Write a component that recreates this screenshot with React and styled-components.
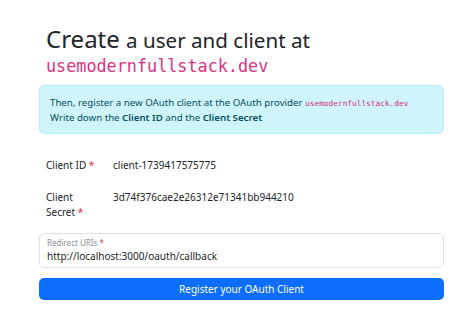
import React from "react";
import styled, { createGlobalStyle } from "styled-components";

const Global = createGlobalStyle`
  html, body { margin: 0; padding: 0; background: #fff; }
  body { font-family: "Noto Sans", "Open Sans", sans-serif; color: #212529; }
  * { box-sizing: border-box; }
`;

const Page = styled.div`
  width: 474px;
  padding: 23px 30px 0 39px;
  display: flex;
  flex-direction: column;
`;

const Title = styled.h1`
  margin: 0 0 0 7px;
  font-weight: 400;
  font-size: 24px;
  line-height: 32px;
  color: #212529;
`;

const Small = styled.span`
  font-size: 20.6px;
`;

const Code = styled.code`
  font-family: "DejaVu Sans Mono", "Liberation Mono", monospace;
  color: #d63384;
  font-size: ${(p) => p.$size || 16.8}px;
`;

const TitleCode = styled(Code)`
  display: block;
  line-height: 20px;
`;

const Alert = styled.div`
  margin-top: 9px;
  padding: 10px 10px 8px 10px;
  background: #cff4fc;
  border: 1px solid #b6effb;
  border-radius: 5px;
  color: #055160;
  font-size: 9.7px;
  line-height: 14px;
`;

const Strong = styled.b`
  font-weight: 600;
`;

const Fields = styled.div`
  margin-top: 24px;
  display: grid;
  grid-template-columns: 67px 1fr;
  row-gap: 17px;
  padding-left: 7px;
  font-size: 10px;
  line-height: 15px;
  color: #212529;
`;

const Label = styled.div`
  width: 55px;
`;

const Req = styled.span`
  color: #dc3545;
`;

const Value = styled.div``;

const Floating = styled.div`
  margin-top: 13px;
  height: 35px;
  border: 1px solid #dee2e6;
  border-radius: 5px;
  padding: 4px 7px 0 7px;
  display: flex;
  flex-direction: column;
`;

const FloatLabel = styled.div`
  font-size: 8px;
  line-height: 10px;
  color: #8a8f94;
`;

const FloatValue = styled.div`
  font-size: 10px;
  line-height: 16px;
  color: #212529;
`;

const Button = styled.button`
  margin-top: 10px;
  height: 22px;
  border: none;
  border-radius: 5px;
  background: #0d6efd;
  color: #fff;
  font-family: inherit;
  font-size: 10px;
  padding: 0;
`;

export default function App() {
  return (
    <>
      <Global />
      <Page>
        <Title>
          Create <Small>a user and client at</Small>
          <TitleCode>usemodernfullstack.dev</TitleCode>
        </Title>
        <Alert>
          Then, register a new OAuth client at the OAuth provider{" "}
          <Code $size={7.8}>usemodernfullstack.dev</Code>
          <br />
          Write down the <Strong>Client ID</Strong> and the <Strong>Client Secret</Strong>
        </Alert>
        <Fields>
          <Label>
            Client ID <Req>*</Req>
          </Label>
          <Value>client-1739417575775</Value>
          <Label>
            Client Secret <Req>*</Req>
          </Label>
          <Value>3d74f376cae2e26312e71341bb944210</Value>
        </Fields>
        <Floating>
          <FloatLabel>
            Redirect URIs <Req>*</Req>
          </FloatLabel>
          <FloatValue>http://localhost:3000/oauth/callback</FloatValue>
        </Floating>
        <Button>Register your OAuth Client</Button>
      </Page>
    </>
  );
}
